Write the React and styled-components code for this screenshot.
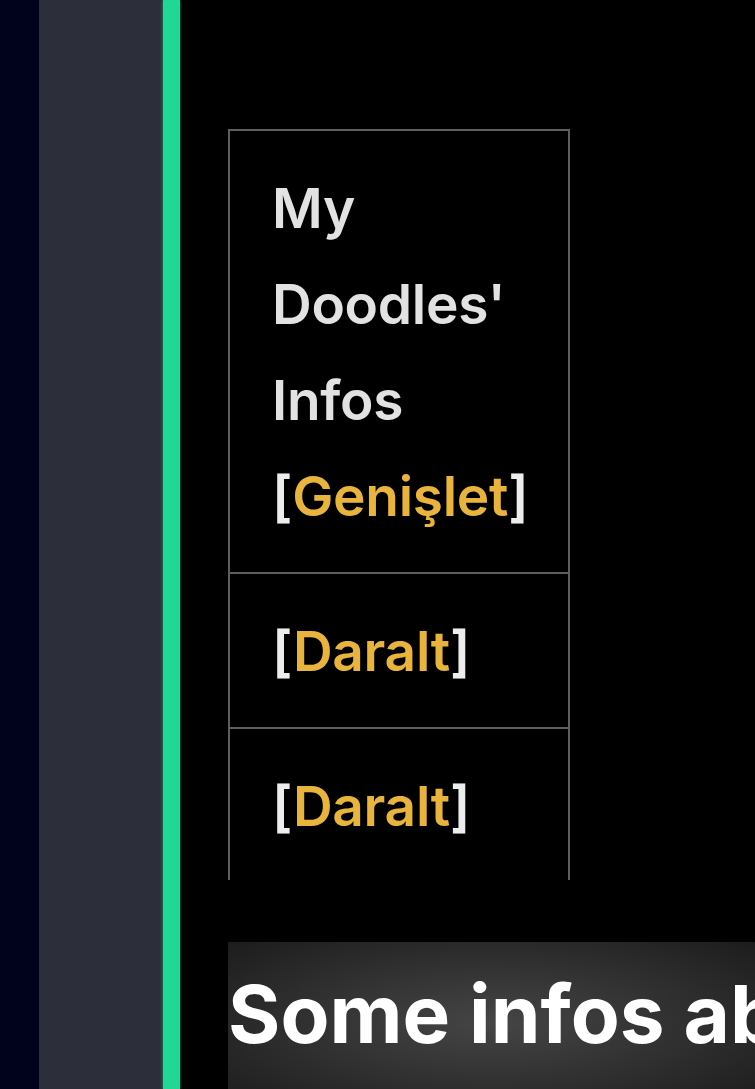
import React from "react";
import styled, { createGlobalStyle } from "styled-components";

const Global = createGlobalStyle`
  html, body { margin: 0; padding: 0; background: #000; }
  body { font-family: Inter, "Noto Sans", sans-serif; overflow: hidden; }
`;

const Page = styled.div`
  display: flex;
  width: 755px;
  height: 1089px;
  overflow: hidden;
  background: #000;
`;

const Edge = styled.div`
  flex: 0 0 39px;
  background: #01031c;
`;

const Sidebar = styled.div`
  flex: 0 0 124px;
  background: #2c2f3a;
`;

const Accent = styled.div`
  flex: 0 0 17px;
  background: #1fd893;
  box-shadow: 0 0 3px rgba(31, 216, 147, 0.6);
`;

const Main = styled.main`
  flex: 1 1 auto;
  min-width: 0;
  padding: 129px 0 0 48px;
  display: flex;
  flex-direction: column;
  overflow: hidden;
`;

const TableClip = styled.div`
  width: 342px;
  height: 751px;
  overflow: hidden;
  flex: 0 0 auto;
`;

const Table = styled.table`
  width: 342px;
  table-layout: fixed;
  border-collapse: collapse;
  border: 2px solid #5e5e5e;
  color: #e2e2e2;
`;

const Cell = styled.td`
  border: 2px solid #5e5e5e;
  padding: 29px 40px 28px 42px;
  font-size: 55px;
  font-weight: 600;
  line-height: 96px;
  letter-spacing: -0.3px;
  vertical-align: top;
`;

const Toggle = styled.span`
  white-space: nowrap;
  color: #ededed;
`;

const Link = styled.a`
  color: #e9b43c;
  text-decoration: none;
`;

const Banner = styled.div`
  margin-top: 62px;
  flex: 1 1 auto;
  background: radial-gradient(ellipse 70% 80% at 50% 55%, #454545 0%, #333 45%, #1c1c1c 100%);
  overflow: hidden;
  padding-top: 22px;
`;

const BannerTitle = styled.h1`
  margin: 0;
  white-space: nowrap;
  color: #fff;
  font-size: 80px;
  font-weight: 700;
  line-height: 100px;
`;

const ToggleLink = ({ label }) => (
  <Toggle>
    [<Link href="#">{label}</Link>]
  </Toggle>
);

export default function App() {
  return (
    <>
      <Global />
      <Page>
        <Edge />
        <Sidebar />
        <Accent />
        <Main>
          <TableClip>
            <Table>
              <tbody>
                <tr>
                  <Cell>
                    My Doodles' Infos <ToggleLink label="Genişlet" />
                  </Cell>
                </tr>
                <tr>
                  <Cell>
                    <ToggleLink label="Daralt" />
                  </Cell>
                </tr>
                <tr>
                  <Cell>
                    <ToggleLink label="Daralt" />
                  </Cell>
                </tr>
                <tr>
                  <Cell>
                    <ToggleLink label="Daralt" />
                  </Cell>
                </tr>
              </tbody>
            </Table>
          </TableClip>
          <Banner>
            <BannerTitle>Some infos about my doodles</BannerTitle>
          </Banner>
        </Main>
      </Page>
    </>
  );
}
